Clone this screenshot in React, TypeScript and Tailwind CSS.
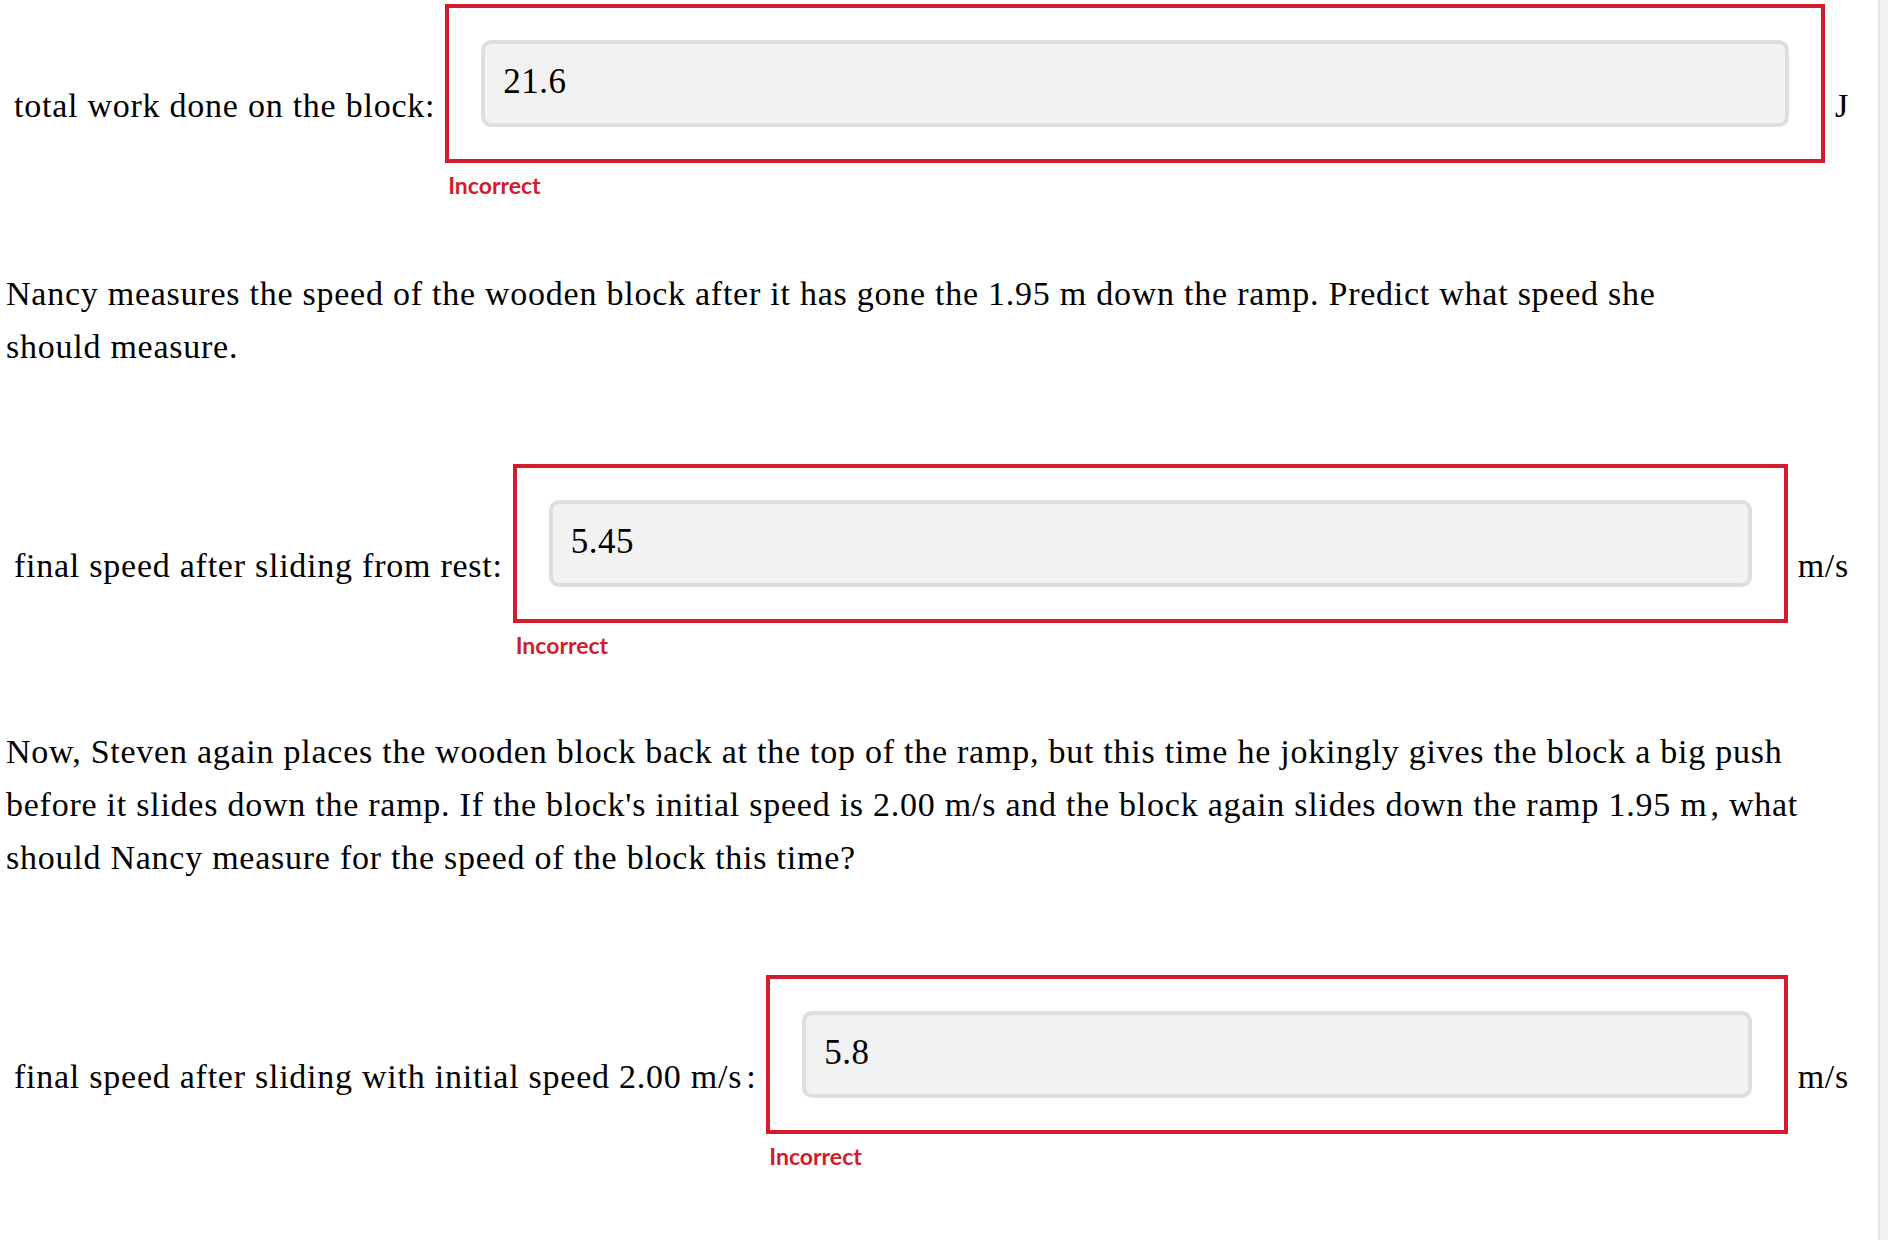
const serif = "font-['Liberation_Serif','Times_New_Roman',serif]";
const body = `${serif} text-[34px] tracking-[0.75px] text-black`;

type AnswerProps = {
  label: React.ReactNode;
  value: string;
  unit: string;
};

function AnswerRow({ label, value, unit }: AnswerProps) {
  return (
    <div className="flex items-start gap-[10px]">
      <div className={`${body} shrink-0 whitespace-nowrap pl-[8px] pt-[76px] leading-[51px]`}>{label}</div>
      <div className="flex min-w-0 flex-1 flex-col">
        <div className="border-4 border-[#d21c2c] p-[32px]">
          <div
            className={`${serif} flex h-[87px] items-center rounded-[10px] border-4 border-[#dedede] bg-[#f2f2f2] pl-[18px] pb-[3px] text-[35px] tracking-[0.5px] text-black`}
          >
            {value}
          </div>
        </div>
        <div className="ml-[3px] mt-[8px] font-['Lato',sans-serif] text-[23px] font-bold leading-[28px] text-[#d21c2c]">
          Incorrect
        </div>
      </div>
      <div className={`${body} shrink-0 pt-[76px] leading-[51px]`}>{unit}</div>
    </div>
  );
}

export default function App() {
  return (
    <div className="flex h-[1240px] w-full overflow-hidden bg-white">
      <div className="flex-1 pl-[6px] pr-[29px] pt-[4px]">
        <AnswerRow label="total work done on the block:" value="21.6" unit="J" />

        <p className={`${body} mt-[68px] leading-[53px]`}>
          Nancy measures the speed of the wooden block after it has gone the 1.95 m down the ramp. Predict what speed she
          <br />
          should measure.
        </p>

        <div className="mt-[91px]">
          <AnswerRow label="final speed after sliding from rest:" value="5.45" unit="m/s" />
        </div>

        <p className={`${body} mt-[66px] leading-[53px]`}>
          Now, Steven again places the wooden block back at the top of the ramp, but this time he jokingly gives the block
          a big push
          <br />
          before it slides down the ramp. If the block's initial speed is 2.00 m/s and the block again slides down the
          ramp 1.95 m<span className="ml-[3px]">,</span> what
          <br />
          should Nancy measure for the speed of the block this time?
        </p>

        <div className="mt-[91px]">
          <AnswerRow
            label={
              <>
                final speed after sliding with initial speed 2.00 m/s<span className="ml-[4px]">:</span>
              </>
            }
            value="5.8"
            unit="m/s"
          />
        </div>
      </div>
      <div className="w-[10px] shrink-0 border-l-2 border-[#e4e4e4] bg-[#f1f1f1]" />
    </div>
  );
}
